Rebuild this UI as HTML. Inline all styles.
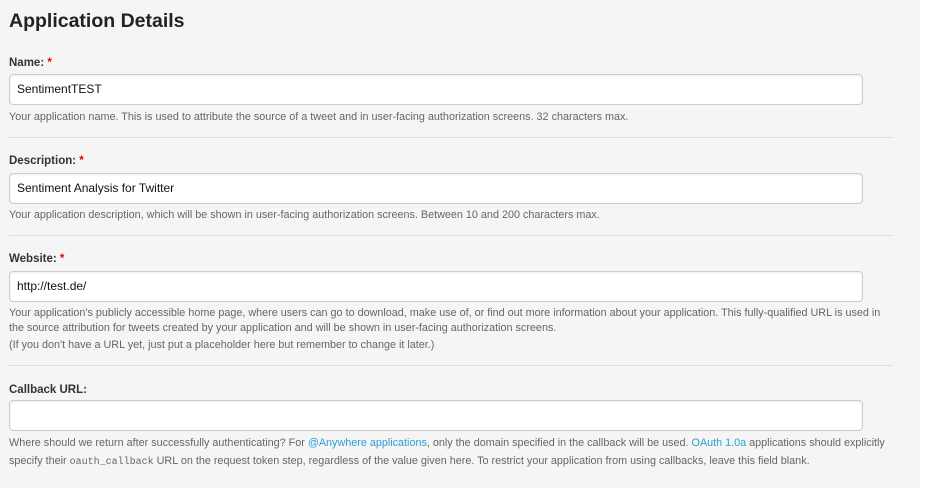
<!DOCTYPE html>
<html><head><style>
body{margin:0;width:945px;height:494px;background:#fff;font-family:"Liberation Sans",Arial,sans-serif;overflow:hidden;position:relative}
.panel{position:absolute;left:0;top:0;width:920px;height:488px;background:#f5f5f5}
.a{position:absolute;left:9px}
h1{position:absolute;left:9px;top:10px;margin:0;font-size:19.5px;font-weight:bold;color:#222}
.lab{font-size:11.5px;font-weight:bold;color:#333}
.lab span{color:#e00}
.inp{position:absolute;left:9px;height:29px;background:#fff;border:1px solid #ccc;border-radius:4px;box-shadow:inset 0 1px 2px rgba(0,0,0,.08);font-size:12px;color:#111;line-height:29px;padding-left:7px;width:845px}
.help{font-size:10.8px;color:#666;line-height:15px}
.sep{position:absolute;left:9px;width:884px;height:1px;background:#ddd}
a{color:#2a9fd8;text-decoration:none}
code{font-family:"Liberation Mono",monospace;font-size:10px}
</style></head><body>
<div class="panel"></div>
<h1>Application Details</h1>
<div class="a lab" style="top:57px">Name: <span>*</span></div>
<div class="inp" style="top:74px">SentimentTEST</div>
<div class="a help" style="top:110px">Your application name. This is used to attribute the source of a tweet and in user-facing authorization screens. 32 characters max.</div>
<div class="sep" style="top:137px"></div>
<div class="a lab" style="top:155px">Description: <span>*</span></div>
<div class="inp" style="top:173px">Sentiment Analysis for Twitter</div>
<div class="a help" style="top:208px">Your application description, which will be shown in user-facing authorization screens. Between 10 and 200 characters max.</div>
<div class="sep" style="top:235px"></div>
<div class="a lab" style="top:253px">Website: <span>*</span></div>
<div class="inp" style="top:271px">http://test.de/</div>
<div class="a help" style="top:306px;width:885px">Your application's publicly accessible home page, where users can go to download, make use of, or find out more information about your application. This fully-qualified URL is used in<br>the source attribution for tweets created by your application and will be shown in user-facing authorization screens.</div>
<div class="a help" style="top:338px">(If you don't have a URL yet, just put a placeholder here but remember to change it later.)</div>
<div class="sep" style="top:365px"></div>
<div class="a lab" style="top:384px">Callback URL:</div>
<div class="inp" style="top:400px"></div>
<div class="a help" style="top:434px;width:900px;line-height:18px">Where should we return after successfully authenticating? For <a>@Anywhere applications</a>, only the domain specified in the callback will be used. <a>OAuth 1.0a</a> applications should explicitly<br>specify their <code>oauth_callback</code> URL on the request token step, regardless of the value given here. To restrict your application from using callbacks, leave this field blank.</div>
</body></html>
